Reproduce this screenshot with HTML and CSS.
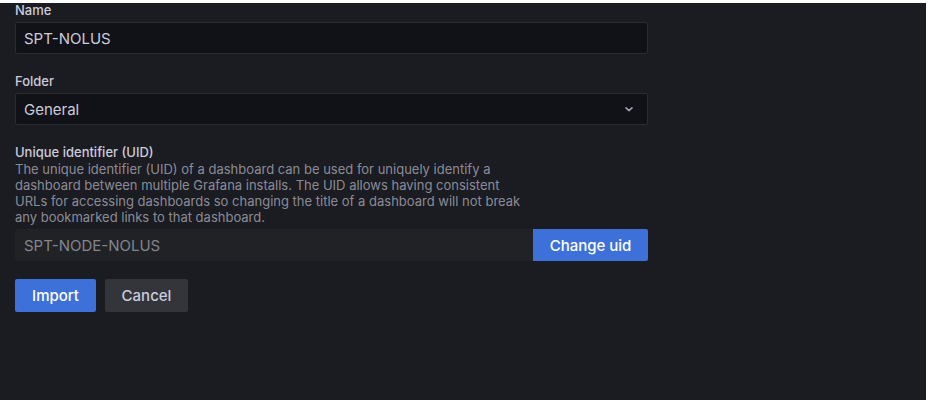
FILE: index.html
```html
<!DOCTYPE html>
<html lang="en">
<head>
    <meta charset="UTF-8">
    <meta name="viewport" content="width=device-width, initial-scale=1.0">
    <title>Import dashboard</title>
    <link rel="stylesheet" href="styles.css">
</head>
<body>
    <div class="panel">
        <form class="import-form">
            <div class="field">
                <label class="field-label" for="name">Name</label>
                <input class="input" id="name" type="text" value="SPT-NOLUS">
            </div>

            <div class="field">
                <label class="field-label">Folder</label>
                <div class="input select">
                    <span>General</span>
                    <svg class="chevron" width="16" height="16" viewBox="0 0 16 16">
                        <path d="M5 6.8 L8 9.6 L11 6.8" fill="none" stroke="currentColor" stroke-width="1.6" stroke-linecap="round" stroke-linejoin="round"/>
                    </svg>
                </div>
            </div>

            <div class="field last">
                <label class="field-label">Unique identifier (UID)</label>
                <p class="field-desc">The unique identifier (UID) of a dashboard can be used for uniquely identify a dashboard between multiple Grafana installs. The UID allows having consistent URLs for accessing dashboards so changing the title of a dashboard will not break any bookmarked links to that dashboard.</p>
                <div class="uid-row">
                    <input class="input disabled" type="text" value="SPT-NODE-NOLUS" disabled>
                    <button type="button" class="btn primary">Change uid</button>
                </div>
            </div>

            <div class="actions">
                <button type="button" class="btn primary">Import</button>
                <button type="button" class="btn secondary">Cancel</button>
            </div>
        </form>
    </div>
</body>
</html>
```

FILE: styles.css
```css
html, body {
    margin: 0;
    height: 100%;
    background-color: #fff;
}

body {
    font-family: Inter, "Noto Sans", sans-serif;
    color: #ccccdc;
    overflow: hidden;
}

.panel {
    margin: 3px 2px 0 0;
    height: calc(100% - 3px);
    background-color: #1a1c21;
    overflow: hidden;
}

.import-form {
    width: 633px;
    padding: 0 0 0 15px;
}

.field {
    margin-bottom: 19px;
}

.field.last {
    margin-bottom: 18px;
}

.field-label {
    display: block;
    font-size: 13px;
    font-weight: 500;
    line-height: 16px;
    color: #ccccdc;
    margin-bottom: 4px;
}

.field:first-child .field-label {
    margin-top: -1px;
}

.field-desc {
    margin: -3px 0 4px;
    width: 520px;
    font-size: 13px;
    line-height: 16px;
    color: rgba(204, 204, 220, 0.65);
}

.input {
    box-sizing: border-box;
    display: block;
    width: 100%;
    height: 32px;
    padding: 0 8px;
    background-color: #111217;
    border: 1px solid #2a2c31;
    border-radius: 2px;
    color: #ccccdc;
    font-family: inherit;
    font-size: 15px;
    outline: none;
}

.select {
    display: flex;
    align-items: center;
    justify-content: space-between;
    padding-right: 10px;
}

.chevron {
    color: #9fa0aa;
}

.uid-row {
    display: flex;
}

.input.disabled {
    flex: 1;
    background-color: #202226;
    border-color: #202226;
    color: #84858f;
    border-radius: 2px 0 0 2px;
}

.btn {
    height: 32px;
    padding: 0 16px;
    border: none;
    border-radius: 2px;
    font-family: inherit;
    font-size: 15px;
    font-weight: 500;
    cursor: pointer;
}

.uid-row .btn {
    width: 115px;
    border-radius: 0 2px 2px 0;
}

.btn.primary {
    background-color: #3d71d9;
    color: #fff;
}

.btn.secondary {
    background-color: #33353b;
    color: #ccccdc;
}

.actions {
    display: flex;
    gap: 9px;
}

.actions .btn {
    height: 33px;
}

.actions .btn.primary {
    width: 81px;
}

.actions .btn.secondary {
    width: 83px;
}
```
